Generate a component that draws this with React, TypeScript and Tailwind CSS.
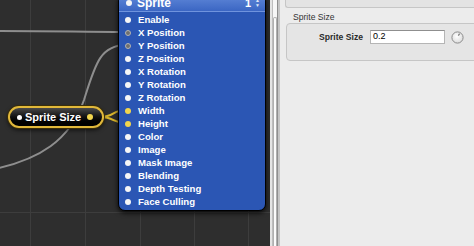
import React from 'react'

type PortState = 'open' | 'linked' | 'live'

const ports: { label: string; state: PortState }[] = [
  { label: 'Enable', state: 'open' },
  { label: 'X Position', state: 'linked' },
  { label: 'Y Position', state: 'linked' },
  { label: 'Z Position', state: 'open' },
  { label: 'X Rotation', state: 'open' },
  { label: 'Y Rotation', state: 'open' },
  { label: 'Z Rotation', state: 'open' },
  { label: 'Width', state: 'live' },
  { label: 'Height', state: 'live' },
  { label: 'Color', state: 'open' },
  { label: 'Image', state: 'open' },
  { label: 'Mask Image', state: 'open' },
  { label: 'Blending', state: 'open' },
  { label: 'Depth Testing', state: 'open' },
  { label: 'Face Culling', state: 'open' },
]

// vertical grid lines of the editor canvas
const gridX = [30, 85, 140, 194, 248]

function PortDot({ state }: { state: PortState }) {
  if (state === 'linked') {
    return <span className="w-[6px] h-[6px] rounded-full bg-[#6f6f6f] border border-[#b4b4b4] shrink-0" />
  }
  if (state === 'live') {
    return <span className="w-[6px] h-[6px] rounded-full bg-[#f1d54e] shrink-0" />
  }
  return <span className="w-[6px] h-[6px] rounded-full bg-[#f6f6f6] shrink-0" />
}

function SpriteNode() {
  return (
    <div className="absolute left-[118px] top-[-6px] w-[148px] rounded-[7px] border border-black bg-[#2b56b4] shadow-[0_2px_5px_rgba(0,0,0,0.85)] overflow-hidden">
      <div className="h-[17px] flex items-center pl-[7px] pr-[5px] bg-gradient-to-b from-[#6088d9] to-[#3b66c3] border-b border-[#6f93dd]">
        <span className="w-[6px] h-[6px] rounded-full bg-[#f6f6f6]" />
        <span className="ml-[5px] text-[12px] font-bold text-white leading-none">Sprite</span>
        <span className="ml-auto text-[11px] font-bold text-white leading-none">1</span>
        <span className="ml-[4px] flex flex-col items-center text-[5px] leading-[5px] text-[#dfe7f7]">
          <span>▲</span>
          <span>▼</span>
        </span>
      </div>
      <div className="pt-[1px] pb-[2px]">
        {ports.map((p) => (
          <div key={p.label} className="h-[13px] flex items-center pl-[6px] gap-[7px]">
            <PortDot state={p.state} />
            <span className="text-[9.6px] font-bold text-white leading-none">{p.label}</span>
          </div>
        ))}
      </div>
    </div>
  )
}

function SizeNode() {
  return (
    <div className="absolute left-[8px] top-[106px] w-[96px] h-[22px] rounded-full border-2 border-[#e1b83a] shadow-[0_0_0_1px_#3a2e08,0_2px_4px_rgba(0,0,0,0.7)] bg-gradient-to-b from-[#4a4a4a] via-[#111] to-black flex items-center pl-[7px] pr-[9px]">
      <span className="w-[5px] h-[5px] rounded-full bg-white" />
      <span className="ml-[3px] text-[11px] font-bold text-white leading-none">Sprite Size</span>
      <span className="ml-auto w-[6px] h-[6px] rounded-full bg-[#f1d54e]" />
    </div>
  )
}

function Knob() {
  return (
    <svg width="13" height="13" viewBox="0 0 13 13">
      <defs>
        <radialGradient id="kg" cx="0.45" cy="0.4" r="0.7">
          <stop offset="0" stopColor="#ffffff" />
          <stop offset="1" stopColor="#d6d6d6" />
        </radialGradient>
      </defs>
      <circle cx="6.5" cy="6.5" r="5.6" fill="url(#kg)" stroke="#8c8c8c" strokeWidth="1" />
      <line x1="8.6" y1="2.6" x2="7.3" y2="4.6" stroke="#7a7a7a" strokeWidth="1.2" />
    </svg>
  )
}

export default function App() {
  return (
    <div className="w-[474px] h-[246px] flex overflow-hidden font-['Liberation_Sans',Arial,sans-serif]">
      {/* node editor canvas */}
      <div className="relative w-[270px] h-full bg-[#2e2e2e] overflow-hidden">
        <svg className="absolute inset-0" width="270" height="246">
          {gridX.map((x) => (
            <line key={x} x1={x + 0.5} y1="0" x2={x + 0.5} y2="246" stroke="#3d3d3d" strokeWidth="1" />
          ))}
          <line x1="0" y1="212.5" x2="270" y2="212.5" stroke="#3d3d3d" strokeWidth="1" />
          <path d="M -5 31 C 60 31, 80 32, 126 32" fill="none" stroke="#8e8e8e" strokeWidth="2" />
          <path d="M -10 170 C 40 160, 70 140, 84 100 C 95 65, 100 45, 126 45" fill="none" stroke="#8e8e8e" strokeWidth="2" />
          <path d="M 100 117 C 115 117, 112 110, 126 110" fill="none" stroke="#d9b52c" strokeWidth="2" />
          <path d="M 100 117 C 115 117, 112 123, 126 123" fill="none" stroke="#d9b52c" strokeWidth="2" />
        </svg>
        <SizeNode />
        <SpriteNode />
      </div>

      {/* inspector */}
      <div className="flex-1 flex h-full bg-[#ececec]">
        <div className="w-[2px] bg-[#e4e4e4]" />
        <div className="w-[1px] bg-[#bdbdbd]" />
        <div className="w-[4px] bg-[#f7f7f7] flex">
          <div className="mt-[17px] w-full rounded-t-full border border-b-0 border-[#b0b0b0] bg-[#fbfbfb]" />
        </div>
        <div className="w-[1px] bg-[#8f8f8f]" />
        <div className="w-[2px] bg-[#c4c4c4]" />
        <div className="flex-1 flex flex-col">
          <div className="ml-[5px] h-[8px] border-l border-b border-[#c6c6c6] bg-[#e3e3e3] rounded-bl-[3px]" />
          <div className="mt-[4px] pl-[13px] text-[8.6px] leading-[10px] text-[#333]">Sprite Size</div>
          <div className="mt-[1px] ml-[6px] mr-[-6px] h-[38px] rounded-[4px] border border-[#c6c6c6] bg-[#e5e5e5] flex items-start pt-[6px]">
            <div className="w-[76px] text-right text-[8.6px] font-bold text-[#2a2a2a] leading-[14px]">Sprite Size</div>
            <div className="ml-[7px] w-[75px] h-[14px] bg-white border border-[#b5b5b5] border-t-[#8f8f8f] flex items-center pl-[2px] text-[9px] text-black">0.2</div>
            <div className="ml-[6px] mt-[1px]">
              <Knob />
            </div>
          </div>
        </div>
      </div>
    </div>
  )
}
